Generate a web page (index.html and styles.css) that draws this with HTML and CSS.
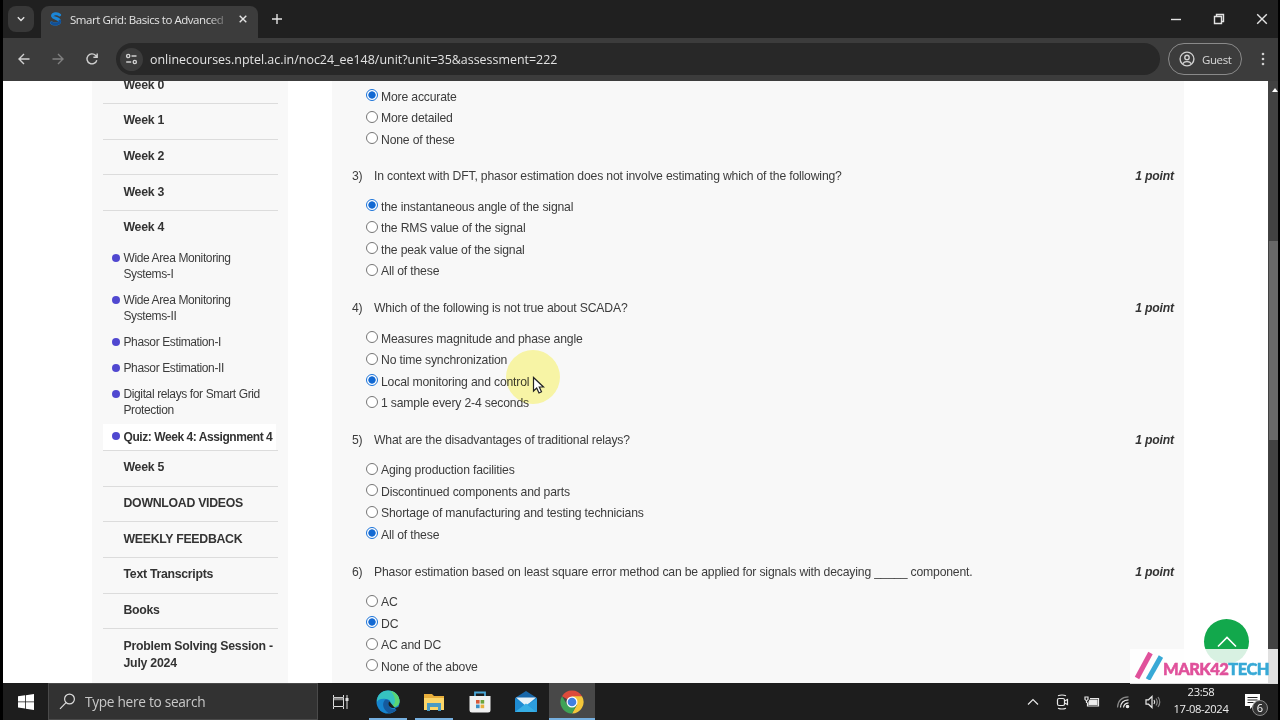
FILE: index.html
```html
<!DOCTYPE html>
<html lang="en">
<head>
  <meta charset="UTF-8">
  <meta name="viewport" content="width=device-width, initial-scale=1.0">
  <title>Smart Grid: Basics to Advanced</title>
  <link rel="stylesheet" href="styles.css">
</head>
<body>
  <div id="tabs">
    <div class="tabSearch">
      <svg width="10" height="10" viewBox="0 0 10 10"><path d="M1.8 3.3 5 6.5l3.2-3.2"/></svg>
    </div>
    <div class="tab">
      <svg class="favicon" width="14" height="14" viewBox="0 0 14 14">
        <path d="M10.6 3C8.6.8 3.2 1.5 3.6 4.2c.4 2.2 6.6 2 7 5 .3 2.8-5.4 4-8 1.6" stroke="#1b86d6" stroke-width="3"/>
        <path d="M10.8 9c.2 2.9-5.4 4.2-8.2 1.8" stroke="#124f96" stroke-width="2.6"/>
      </svg>
      <span class="tabTitle">Smart Grid: Basics to Advanced</span>
      <svg class="close" width="10" height="10" viewBox="0 0 10 10"><path d="m1.7 1.7 6.6 6.6M8.3 1.7 1.7 8.3"/></svg>
    </div>
    <svg class="newTab" width="12" height="12" viewBox="0 0 12 12"><path d="M6 1v10M1 6h10"/></svg>
    <div class="winButtons">
      <svg width="12" height="12" viewBox="0 0 12 12"><path d="M1 6.5h10"/></svg>
      <svg width="12" height="12" viewBox="0 0 12 12"><path d="M1.5 3.5h7v7h-7zM3.5 3.5v-2h7v7h-2"/></svg>
      <svg width="12" height="12" viewBox="0 0 12 12"><path d="m1.2 1.2 9.6 9.6M10.8 1.2l-9.6 9.6"/></svg>
    </div>
  </div>

  <div id="toolbar">
    <svg width="14" height="14" viewBox="0 0 14 14"><path d="M12.5 7H2M7 2 2 7l5 5"/></svg>
    <svg class="off" width="14" height="14" viewBox="0 0 14 14"><path d="M1.5 7H12M7 2l5 5-5 5"/></svg>
    <svg width="14" height="14" viewBox="0 0 14 14"><path d="M11.8 8.2A5 5 0 1 1 10.7 3.5l1.3 1.4M12.2 1.4v3.8H8.4"/></svg>
    <div class="address">
      <div class="siteInfo">
        <svg width="13" height="12" viewBox="0 0 13 12"><circle cx="3.2" cy="3" r="1.6"/><path d="M6.5 3h5M1.2 9h5"/><circle cx="9.8" cy="9" r="1.6"/></svg>
      </div>
      <span class="url">onlinecourses.nptel.ac.in/noc24_ee148/unit?unit=35&amp;assessment=222</span>
    </div>
    <div class="guest">
      <svg width="16" height="16" viewBox="0 0 16 16"><circle cx="8" cy="8" r="6.9"/><circle cx="8" cy="6.4" r="2.2"/><path d="M3.6 12.8c1.8-3 7-3 8.8 0"/></svg>
      <span>Guest</span>
    </div>
    <svg class="dots" width="4" height="16" viewBox="0 0 4 16"><circle cx="2" cy="3" r="1.3"/><circle cx="2" cy="8" r="1.3"/><circle cx="2" cy="13" r="1.3"/></svg>
  </div>

  <div id="page">
    <div id="sidebar">
      <div class="unit">Week 0</div>
      <div class="unit">Week 1</div>
      <div class="unit">Week 2</div>
      <div class="unit">Week 3</div>
      <div class="unit open">Week 4</div>
      <ul class="lessons">
        <li>Wide Area Monitoring Systems-I</li>
        <li>Wide Area Monitoring Systems-II</li>
        <li>Phasor Estimation-I</li>
        <li>Phasor Estimation-II</li>
        <li>Digital relays for Smart Grid Protection</li>
        <li class="current">Quiz: Week 4: Assignment 4</li>
      </ul>
      <div class="unit">Week 5</div>
      <div class="unit">DOWNLOAD VIDEOS</div>
      <div class="unit">WEEKLY FEEDBACK</div>
      <div class="unit">Text Transcripts</div>
      <div class="unit">Books</div>
      <div class="unit">Problem Solving Session - July 2024</div>
    </div>

    <div id="quiz">
      <div class="question">
        <label><input type="radio" name="q2" checked>More accurate</label>
        <label><input type="radio" name="q2">More detailed</label>
        <label><input type="radio" name="q2">None of these</label>
      </div>
      <div class="question">
        <div class="ask"><span class="num">3)</span><span>In context with DFT, phasor estimation does not involve estimating which of the following?</span><em>1 point</em></div>
        <label><input type="radio" name="q3" checked>the instantaneous angle of the signal</label>
        <label><input type="radio" name="q3">the RMS value of the signal</label>
        <label><input type="radio" name="q3">the peak value of the signal</label>
        <label><input type="radio" name="q3">All of these</label>
      </div>
      <div class="question">
        <div class="ask"><span class="num">4)</span><span>Which of the following is not true about SCADA?</span><em>1 point</em></div>
        <label><input type="radio" name="q4">Measures magnitude and phase angle</label>
        <label><input type="radio" name="q4">No time synchronization</label>
        <label><input type="radio" name="q4" checked>Local monitoring and control</label>
        <label><input type="radio" name="q4">1 sample every 2-4 seconds</label>
      </div>
      <div class="question">
        <div class="ask"><span class="num">5)</span><span>What are the disadvantages of traditional relays?</span><em>1 point</em></div>
        <label><input type="radio" name="q5">Aging production facilities</label>
        <label><input type="radio" name="q5">Discontinued components and parts</label>
        <label><input type="radio" name="q5">Shortage of manufacturing and testing technicians</label>
        <label><input type="radio" name="q5" checked>All of these</label>
      </div>
      <div class="question">
        <div class="ask"><span class="num">6)</span><span>Phasor estimation based on least square error method can be applied for signals with decaying _____ component.</span><em>1 point</em></div>
        <label><input type="radio" name="q6">AC</label>
        <label><input type="radio" name="q6" checked>DC</label>
        <label><input type="radio" name="q6">AC and DC</label>
        <label><input type="radio" name="q6">None of the above</label>
      </div>
    </div>

    <div id="scrollbar">
      <div class="arrowUp"></div>
      <div class="thumb"></div>
    </div>

    <div id="toTop">
      <svg width="22" height="14" viewBox="0 0 22 14"><path d="m2 11.5 9-9 9 9"/></svg>
    </div>
  </div>

  <div id="highlight"></div>
  <svg id="cursor" width="13" height="19" viewBox="0 0 13 19"><path d="M1.5 1.5v13.5l3.2-3 2.3 5 2.5-1.2-2.2-4.8h4.2z"/></svg>

  <div id="watermark">
    <svg width="30" height="30" viewBox="0 0 30 30"><path d="M4 28 17.5 3" stroke="#e0519b"/><path d="M15 29.5 28 6.5" stroke="#38a9d6"/></svg>
    <span class="pink">MARK42</span><span class="blue">TECH</span>
  </div>

  <div id="taskbar">
    <div class="start">
      <svg width="16" height="16" viewBox="0 0 16 16"><path d="M0 2.3 7 1.3v6.2H0zM7.8 1.2 16 0v7.5H7.8zM0 8.3h7v6.2l-7-1zM7.8 8.3H16V16l-8.2-1.2z"/></svg>
    </div>
    <div class="search">
      <svg width="17" height="17" viewBox="0 0 17 17"><circle cx="10.5" cy="6" r="4.9"/><path d="m7 9.6-6 6.2"/></svg>
      <span>Type here to search</span>
    </div>
    <div class="app taskView">
      <svg width="16" height="14" viewBox="0 0 16 14" stroke="#ddd" fill="none"><path d="M.5 0v2.5h10V0M.5 14v-2.5h10V14M.5 3v8M10.5 3v8M14 0v14"/><path d="M1 4h9" stroke="#888" stroke-width="2.5"/><path d="M12.5 4.5h3" stroke-width="3"/></svg>
    </div>
    <div class="app running">
      <svg width="24" height="24" viewBox="0 0 24 24">
        <circle cx="12" cy="12" r="11.5" fill="#1685cf"/>
        <path d="M1 10C2 3.5 7 .5 12 .5c7 0 11.5 5 11.5 10.5 0 4-3 6-6.5 6-2.5 0-3.5-1-3-2 1.5-2 .5-6-4-6C6 8.5 2 9 1 12z" fill="#36c3c0"/>
        <path d="M14 1c6 1 9.5 5.5 9.5 10 0 4-3 6-6.5 6-2.5 0-3.5-1-3-2 3 1 5-1 5-4 0-4-2-8-5-10z" fill="#5ad672"/>
        <path d="M9.5 9.5c-4 3-3 10 3 13.5 4 .3 7-1.5 9.3-4.5-4 1.5-8.3.5-9.3-3.5-.5-2 .5-3 1.3-3-.3-1.5-2-2.8-4.3-2.5z" fill="#155a9e"/>
        <path d="M13.5 11.5c-1.5 1-1.5 3.5 0 5 2 2 6 2 8.5.5l1 1-2 2.5" fill="#1d1d1d"/>
      </svg>
    </div>
    <div class="app running">
      <svg width="22" height="18" viewBox="0 0 22 18"><path d="M1 1h8l2 2h10v14H1z" fill="#e8ae3b"/><path d="M1 5h20v12H1z" fill="#fbd668"/><path d="M4 10h14v8h-3v-4H7v4H4z" fill="#4a9bc4"/></svg>
    </div>
    <div class="app">
      <svg width="22" height="22" viewBox="0 0 22 22"><path d="M6 6V1.5h10V6" fill="none" stroke="#4aa7d8" stroke-width="1.8"/><path d="M.5 5h21v14q0 2.5-2.5 2.5H3Q.5 21.5.5 19z" fill="#f1f1f1"/><path d="M7 9h3.6v3.6H7z" fill="#d9593a"/><path d="M11.6 9h3.6v3.6h-3.6z" fill="#6ba53a"/><path d="M7 13.6h3.6v3.6H7z" fill="#3b8fc6"/><path d="M11.6 13.6h3.6v3.6h-3.6z" fill="#e7b03c"/></svg>
    </div>
    <div class="app">
      <svg width="24" height="22" viewBox="0 0 24 22"><path d="M1 7 12 0l11 7v6H1z" fill="#1766a8"/><path d="M1 7.5h22V21H1z" fill="#1e8bd2"/><path d="M2 6.5h20L12 15z" fill="#e8f2f8"/><path d="m1 21 11-8.5L23 21z" fill="#36aee5"/><path d="m23 8v13L13 13.5z" fill="#2d9ede"/></svg>
    </div>
    <div class="app running active">
      <svg width="24" height="24" viewBox="0 0 24 24">
        <path d="M12 12 2 6.25A11.5 11.5 0 0 1 22 6.25z" fill="#dd4b3b"/>
        <path d="M12 6.25h10A11.5 11.5 0 0 1 12 23.5L16.8 15z" fill="#f3c63a"/>
        <path d="M7.2 14.7 2 6.25A11.5 11.5 0 0 0 12 23.5l4.8-8.8z" fill="#3fa356"/>
        <circle cx="12" cy="12" r="5.5" fill="#fff"/><circle cx="12" cy="12" r="4.3" fill="#3f7fe0"/>
      </svg>
    </div>
    <div class="tray">
      <svg width="12" height="8" viewBox="0 0 12 8"><path d="m1 6.5 5-5 5 5"/></svg>
      <svg width="14" height="16" viewBox="0 0 14 16"><rect x="2.5" y="4.5" width="7" height="7" rx="1.5"/><path d="m9.5 7 3-1.5v5l-3-1.500M3 1.800q4-1.600 8 0M3 14.200q4 1.600 8 0"/></svg>
      <svg width="16" height="12" viewBox="0 0 16 12"><path d="M6 2.5h8.5V10H3.5V6.5"/><path d="M6 4h7v4.5H5V6z" fill="#eee"/><path d="M1 1v2.5q1.5 2 3 0V1zM2.5 5v2"/></svg>
      <svg width="14" height="14" viewBox="0 0 14 14"><path d="M1.5 12.5Q2 2 12.5 1.8" stroke="#888"/><path d="M4.5 12.5Q4.8 5.2 12.5 4.8M7.5 12.5Q8 8.2 12.5 7.8"/><circle cx="11.5" cy="11.5" r="1.2" fill="#eee"/></svg>
      <svg width="16" height="14" viewBox="0 0 16 14"><path d="M1 4.8h2.5L7 1.5v11L3.5 9.2H1z"/><path d="M9 5q1.5 2 0 4"/><path d="M11 3.5q2.5 3.5 0 7M13 2q3.5 5 0 10" stroke="#888"/></svg>
    </div>
    <div class="clock"><div>23:58</div><div>17-08-2024</div></div>
    <div class="notif">
      <svg width="16" height="16" viewBox="0 0 16 16"><path d="M0 0h15v12H8l-3 3v-3H0z" fill="#fff"/><path d="M2.5 3.5h10M2.5 6h10M2.5 8.5h6" stroke="#222"/></svg>
      <span class="count">6</span>
    </div>
  </div>
</body>
</html>
```

FILE: styles.css
```css
body{
  width: 1275px;
  height: 720px;
  box-sizing: border-box;
  margin: 0px 0px 0px 3px;
  font-family: "Open Sans", "Noto Sans", sans-serif;
  display: flex;
  flex-direction: column;
  overflow: hidden;
  position: relative;
}
html{
  background: #000;
  overflow: hidden;
}
svg{
  display: block;
  flex: none;
}

/* browser tabs */
#tabs{
  height: 38px;
  flex: none;
  background: #202020;
  display: flex;
  align-items: center;
}
#tabs svg{
  fill: none;
  stroke: #e3e3e3;
  stroke-width: 1.4;
}
.tabSearch{
  width: 26px;
  height: 26px;
  margin-left: 5px;
  border-radius: 8px;
  background: #383838;
  display: flex;
  align-items: center;
  justify-content: center;
}
.tab{
  width: 217px;
  height: 32px;
  margin: 6px 0px 0px 7px;
  padding: 0px 10px 6px 8px;
  box-sizing: border-box;
  border-radius: 8px 8px 0px 0px;
  background: #3c3c3c;
  display: flex;
  align-items: center;
}
#tabs .favicon path{
  stroke-linecap: round;
}
.tabTitle{
  width: 154px;
  margin-left: 7px;
  white-space: nowrap;
  font-size: 11.5px;
  letter-spacing: -0.45px;
  color: #e3e3e3;
  -webkit-mask-image: linear-gradient(90deg, #000 90%, rgba(0,0,0,0.3));
  mask-image: linear-gradient(90deg, #000 90%, rgba(0,0,0,0.3));
}
.close{
  margin-left: 14px;
}
.newTab{
  margin-left: 13px;
}
.winButtons{
  display: flex;
  gap: 31px;
  margin-left: auto;
  margin-right: 10px;
}

/* address row */
#toolbar{
  height: 43px;
  flex: none;
  box-sizing: border-box;
  padding-bottom: 1px;
  background: #3c3c3c;
  display: flex;
  align-items: center;
}
#toolbar svg{
  fill: none;
  stroke: #d0d0d0;
  stroke-width: 1.4;
}
#toolbar > svg{
  margin-left: 14px;
}
#toolbar > svg + svg{
  margin-left: 20px;
}
#toolbar .off{
  stroke: #808080;
}
.address{
  width: 1044px;
  height: 32px;
  margin-left: 17px;
  border-radius: 16px;
  background: #282828;
  display: flex;
  align-items: center;
}
.siteInfo{
  width: 23px;
  height: 23px;
  margin-left: 4px;
  border-radius: 50%;
  background: #3c3c3c;
  display: flex;
  align-items: center;
  justify-content: center;
}
.url{
  margin-left: 7px;
  font-size: 12.45px;
  color: #e3e3e3;
}
.guest{
  width: 74px;
  height: 32px;
  box-sizing: border-box;
  margin-left: 8px;
  padding-left: 10px;
  border: 1px solid #8a8a8a;
  border-radius: 16px;
  display: flex;
  align-items: center;
  gap: 7px;
  font-size: 11.5px;
  letter-spacing: -0.4px;
  color: #d8d8d8;
}
#toolbar .dots{
  margin-left: 19px;
  fill: #d0d0d0;
  stroke: none;
}

/* course page */
#page{
  height: 602px;
  flex: none;
  background: #fff;
  display: flex;
  overflow: hidden;
  position: relative;
  font-family: "Liberation Sans", Arial, sans-serif;
  color: #3c3c3c;
}
#sidebar{
  width: 196px;
  box-sizing: border-box;
  margin-left: 89px;
  padding: 0px 10px 0px 11px;
  background: #f8f8f8;
}
.unit{
  height: 35.7px;
  box-sizing: border-box;
  padding: 8.3px 0px 0px 20.5px;
  border-top: 1px solid #dcdcdc;
  font-size: 12.3px;
  font-weight: bold;
  letter-spacing: -0.28px;
  line-height: 17px;
  color: #333;
}
.unit:first-child{
  margin-top: -13.6px;
}
.unit.open{
  height: 35px;
}
.unit:last-child{
  height: 56px;
  letter-spacing: -0.23px;
}
.lessons{
  margin: 0px;
  padding: 0px;
  list-style: none;
}
.lessons li{
  position: relative;
  margin-right: 2px;
  padding: 4.7px 0px 5.3px 20.5px;
  font-size: 12px;
  letter-spacing: -0.38px;
  line-height: 16.1px;
}
.lessons li::before{
  content: "";
  position: absolute;
  left: 9px;
  top: 8.6px;
  width: 8px;
  height: 8px;
  border-radius: 50%;
  background: #5048d0;
}
.lessons .current{
  background: #fff;
  font-weight: bold;
  letter-spacing: -0.43px;
  color: #333;
  white-space: nowrap;
}
#quiz{
  width: 852px;
  box-sizing: border-box;
  margin-left: 44px;
  padding: 5.5px 10px 0px 20px;
  background: #f8f8f8;
}
.question{
  margin-bottom: 15.2px;
  font-size: 12.2px;
  letter-spacing: -0.17px;
}
.ask{
  display: flex;
  height: 20px;
  margin-bottom: 10.6px;
  line-height: 20px;
}
.num{
  width: 22px;
}
.ask em{
  margin-left: auto;
  font-weight: bold;
  color: #333;
}
.question label{
  display: flex;
  height: 21.5px;
  padding-left: 14px;
  line-height: 21.5px;
}
.question input{
  appearance: none;
  width: 12px;
  height: 12px;
  box-sizing: border-box;
  margin: 2.5px 3px 0px 0px;
  border: 1px solid #767676;
  border-radius: 50%;
  background: #fff;
}
.question input:checked{
  border-color: #1a73d9;
  background: radial-gradient(circle, #1269d3 3.3px, #fff 4px);
}
#scrollbar{
  width: 10px;
  margin-left: auto;
  background: #424242;
}
.arrowUp{
  width: 0px;
  margin: 7px 0px 0px 4px;
  border: 3px solid transparent;
  border-top: none;
  border-bottom: 4px solid #fff;
}
.thumb{
  height: 199px;
  margin: 149px 0px 0px 1px;
  background: #686868;
}
#toTop{
  position: absolute;
  left: 1201px;
  top: 538px;
  width: 45px;
  height: 45px;
  border-radius: 50%;
  background: #12a84c;
  display: flex;
  align-items: center;
  justify-content: center;
}
#toTop path{
  fill: none;
  stroke: #fff;
  stroke-width: 1.6;
}

/* recording overlays */
#highlight{
  position: absolute;
  left: 503px;
  top: 350px;
  width: 54px;
  height: 54px;
  border-radius: 50%;
  background: #fefbaa;
  mix-blend-mode: multiply;
}
#cursor{
  position: absolute;
  left: 529px;
  top: 376px;
  fill: #fff;
  stroke: #222;
  stroke-width: 1.2;
}
#watermark{
  position: absolute;
  left: 1127px;
  top: 649px;
  width: 148px;
  height: 35px;
  background: rgba(255,255,255,0.84);
  display: flex;
  align-items: center;
  font-family: Lato, sans-serif;
  font-size: 16.5px;
  font-weight: 900;
  letter-spacing: -0.55px;
}
#watermark svg{
  margin: 0px 0px 3px 3px;
  stroke-width: 5;
}
#watermark span{
  padding-top: 5px;
  -webkit-text-stroke: 0.5px;
}
.pink{
  color: #e0519b;
}
.blue{
  color: #38a9d6;
}

/* windows taskbar */
#taskbar{
  flex: 1;
  background: #1d1d1d;
  display: flex;
  align-items: stretch;
}
.start{
  width: 45px;
  display: flex;
  align-items: center;
  justify-content: center;
}
.start svg{
  fill: #fff;
}
.search{
  width: 270px;
  box-sizing: border-box;
  padding-left: 10px;
  border: 1px solid #4a4a4a;
  background: #323232;
  display: flex;
  align-items: center;
  gap: 9px;
  font-size: 13.7px;
  letter-spacing: -0.3px;
  color: #c8c8c8;
}
.search svg{
  fill: none;
  stroke: #ddd;
  stroke-width: 1.2;
}
.app{
  width: 46px;
  display: flex;
  align-items: center;
  justify-content: center;
  box-sizing: border-box;
}
.taskView{
  padding-right: 1px;
  margin-right: 1px;
}
.running{
  background: linear-gradient(#76b0e0, #76b0e0) center bottom / 38px 2px no-repeat;
}
.active{
  background: linear-gradient(#76b0e0, #76b0e0) center bottom / 46px 2px no-repeat #484848;
}
.tray{
  margin-left: auto;
  display: flex;
  align-items: center;
  gap: 15.5px;
}
.tray svg{
  fill: none;
  stroke: #e8e8e8;
  stroke-width: 1.2;
}
.clock{
  width: 60px;
  margin-left: 10px;
  padding-top: 1px;
  font-size: 11.2px;
  letter-spacing: -0.35px;
  line-height: 16.5px;
  text-align: center;
  color: #eee;
}
.notif{
  position: relative;
  width: 33px;
  margin-left: 14px;
  padding-top: 11px;
}
.count{
  position: absolute;
  left: 7px;
  top: 17px;
  width: 14px;
  height: 14px;
  border: 1px solid #8a8a8a;
  border-radius: 50%;
  background: #333;
  font-size: 11px;
  line-height: 14px;
  text-align: center;
  color: #fff;
}
```
